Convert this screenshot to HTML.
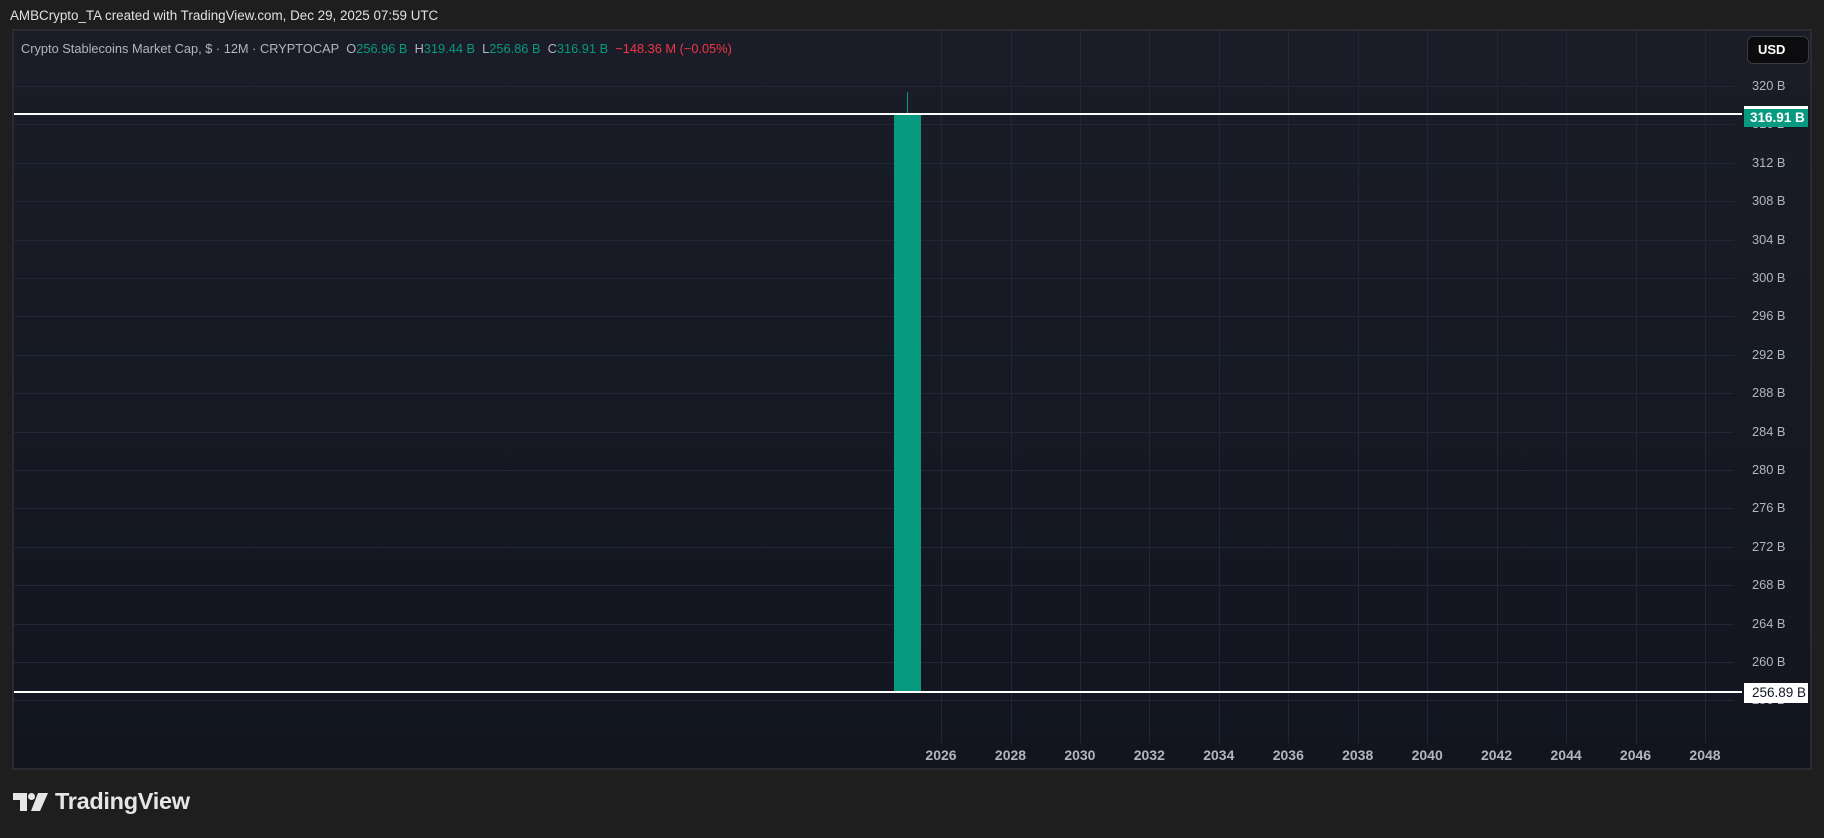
<!DOCTYPE html><html><head><style>
*{margin:0;padding:0;box-sizing:border-box}
body{width:1824px;height:838px;background:#1e1e1e;font-family:"Liberation Sans",sans-serif;position:relative;overflow:hidden;color:#d1d4dc}
.abs{position:absolute;white-space:nowrap}
#frame{left:12px;top:29px;width:1800px;height:741px;border:2px solid #2a2b30;background:linear-gradient(#1a1d28,#121520)}
.hl{position:absolute;left:0;width:1720px;height:1px;background:#232734}
.vl{position:absolute;top:0;height:712px;width:1px;background:#232734}
.pl{position:absolute;left:1738px;font-size:12.8px;color:#b2b5be;width:60px;white-space:nowrap}
.yr{position:absolute;top:716px;font-size:14px;font-weight:bold;color:#b2b5be;width:60px;text-align:center}
</style></head><body>
<div class="abs" style="left:10px;top:8px;font-size:13.4px;color:#e0e0e0">AMBCrypto_TA created with TradingView.com, Dec 29, 2025 07:59 UTC</div>
<div id="frame" class="abs">
<div id="g"></div>
<div class="abs" style="left:7px;top:10px;font-size:12.8px;color:#b2b5be">Crypto Stablecoins Market Cap, $ · 12M · CRYPTOCAP&nbsp;&nbsp;O<span style="color:#089981">256.96 B</span>&nbsp;&nbsp;H<span style="color:#089981">319.44 B</span>&nbsp;&nbsp;L<span style="color:#089981">256.86 B</span>&nbsp;&nbsp;C<span style="color:#089981">316.91 B</span>&nbsp;&nbsp;<span style="color:#f23645">−148.36 M (−0.05%)</span></div>
<div class="abs" style="left:1733px;top:5px;width:62px;height:28px;background:#0c0c0e;border:1px solid #3a3b40;border-radius:6px;color:#fff;font-size:13px;font-weight:bold;line-height:26px;padding-left:10px">USD</div>
<div class="abs" style="left:893px;top:61px;width:1px;height:25px;background:#089981"></div>
<div class="abs" style="left:880px;top:84px;width:27px;height:578px;background:#089981"></div>
<div class="abs" style="left:0;top:82px;width:1728px;height:2px;background:#fff"></div>
<div class="abs" style="left:0;top:660px;width:1728px;height:2px;background:#fff"></div>
<div class="abs" style="left:1730px;top:75px;width:64px;height:3px;background:#fff"></div>
<div class="abs" style="left:1730px;top:78px;width:64px;height:18px;background:#089981;color:#fff;font-size:13.5px;font-weight:bold;line-height:18px;padding-left:6px">316.91 B</div>
<div class="abs" style="left:1730px;top:652px;width:64px;height:20px;background:#fff;color:#131722;font-size:13.5px;line-height:20px;padding-left:8px">256.89 B</div>
</div>
<script>
var g=document.getElementById('g'),h='';
var lab=[320,316,312,308,304,300,296,292,288,284,280,276,272,268,264,260,256];
for(var i=0;i<lab.length;i++){var y=86+i*38.4-31;h+='<div class="hl" style="top:'+y.toFixed(1)+'px"></div>';h+='<div class="pl" style="top:'+(y-8).toFixed(1)+'px">'+lab[i]+' B</div>';}
for(var j=0;j<12;j++){var x=941+j*69.45-14;h+='<div class="vl" style="left:'+x.toFixed(1)+'px"></div><div class="yr" style="left:'+(x-30).toFixed(1)+'px">'+(2026+2*j)+'</div>';}
g.innerHTML=h;
</script>
<div class="abs" style="left:13px;top:792px;width:36px;height:20px">
<svg width="36" height="20" viewBox="0 0 36 20"><path d="M0 1h14v18h-7v-11h-7z" fill="#e6e6e6"/><circle cx="18.5" cy="4.5" r="3.5" fill="#e6e6e6"/><path d="M25 1h10l-8 18h-9z" fill="#e6e6e6"/></svg></div>
<div class="abs" style="left:55px;top:788px;font-size:23.5px;font-weight:bold;color:#e6e6e6;letter-spacing:-0.3px">TradingView</div>
</body></html>
